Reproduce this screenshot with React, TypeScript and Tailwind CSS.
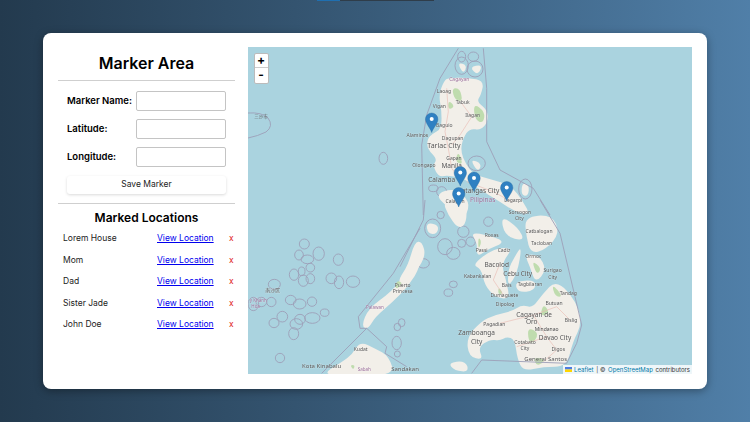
import React from "react";

type P = [number, number];
const O3: P = [380, 45];
const O4: P = [400, 200];
const O5: P = [250, 200];
const conv = (o: P, pts: number[]) => {
  const out: string[] = [];
  for (let i = 0; i < pts.length; i += 2) out.push(`${(o[0] + pts[i] / 3).toFixed(1)},${(o[1] + pts[i + 1] / 3).toFixed(1)}`);
  return out.join(" ");
};
const smooth = (o: P, pts: number[]) => {
  const p: P[] = [];
  for (let i = 0; i < pts.length; i += 2) p.push([o[0] + pts[i] / 3, o[1] + pts[i + 1] / 3]);
  const mid = (a: P, b: P): P => [(a[0] + b[0]) / 2, (a[1] + b[1]) / 2];
  const s = mid(p[p.length - 1], p[0]);
  let d = `M${s[0].toFixed(1)} ${s[1].toFixed(1)}`;
  p.forEach((c, i) => {
    const m = mid(c, p[(i + 1) % p.length]);
    d += ` Q${c[0].toFixed(1)} ${c[1].toFixed(1)} ${m[0].toFixed(1)} ${m[1].toFixed(1)}`;
  });
  return d + " Z";
};

const land: [P, number[]][] = [
  [O3, [205,98,265,98,312,108,303,150,290,170,322,195,324,230,302,256,270,250,248,280,242,320,257,356,280,388,330,402,394,422,430,470,450,510,405,500,360,470,300,434,262,408,240,398,200,391,176,396,158,362,172,342,142,312,142,282,158,266,184,252,185,200,176,150,192,108]],
  [O3, [165,448,225,428,270,470,258,514,235,514,202,486]],
  [O3, [270,342,306,356,294,382]],
  [O3, [426,414,448,420,444,454,424,450]],
  [O3, [232,52,262,60,250,88]],
  [O3, [268,66,308,58,294,92]],
  [O4, [128,2,196,-4,202,30,196,76,172,84,144,44]],
  [O4, [210,94,296,114,310,130,266,146,230,172,232,130]],
  [O4, [284,144,340,144,304,190,318,240,330,298,286,292,254,256,244,206,216,194]],
  [O4, [366,136,352,220,324,262,324,210,344,170]],
  [O4, [344,244,408,240,404,272,354,278]],
  [O4, [374,164,416,164,440,210,406,250,390,200]],
  [O4, [374,50,456,44,480,100,436,150,392,160,379,110]],
  [O4, [302,46,356,84,374,124,314,108]],
  [O4, [282,345,336,334,366,314,398,324,426,284,470,238,530,306,546,372,518,426,500,500,430,500,370,514,352,476,344,418,320,410,300,422,270,418,234,442,250,480,206,470,200,412,244,364]],
  [O4, [44,126,66,124,78,170,36,230,6,264,-6,240,24,196]],
  [O4, [78,68,116,74,112,102,84,102]],
  [O4, [144,488,196,482,208,516,164,512]],
  [O5, [334,378,356,324,426,274,464,224,512,128,512,198,476,258,426,308,376,350,354,388]],
  [O5, [205,530,276,486,306,464,330,424,376,446,416,468,436,530]],
];

const green: [P, number[]][] = [
  [O3, [215,130,240,130,248,170,225,165]],
  [O3, [280,175,315,200,310,235,285,225]],
  [O3, [235,318,250,360,225,350]],
  [O3, [205,165,225,185,205,195]],
  [O4, [235,110,245,125,235,150]],
  [O4, [430,310,450,340,420,350]],
  [O4, [380,380,420,400,390,440]],
  [O4, [400,470,440,480,410,500]],
  [O4, [455,250,490,290,465,290]],
  [O4, [395,180,425,205,410,225]],
  [O4, [295,260,310,280,295,285]],
  [O5, [440,240,460,250,435,270]],
  [O5, [300,495,315,495,310,510]],
];

const lines: [P, number[]][] = [
  [O3, [235,10,180,100,140,210,125,300,130,510]],
  [O3, [310,10,320,130,320,290,360,375,460,430,510,510]],
  [O4, [75,0,70,60,0,200]],
  [O4, [420,0,480,100,545,375,530,430,500,490,245,480,215,520]],
  [O5, [510,85,430,220,325,350,330,385,350,385,215,520]],
  [O5, [350,385,410,440,405,460,470,500]],
];

const roads: [P, number[]][] = [
  [O3, [200,130,205,200,195,260,205,310,215,370,245,410]],
  [O3, [245,175,275,215,240,270,215,300]],
  [O3, [260,410,340,440,395,470]],
  [O4, [300,190,280,240,310,285]],
  [O4, [300,370,400,345,470,320,510,360]],
  [O4, [400,345,440,410,470,450,430,485]],
  [O4, [350,440,440,410]],
];

const rings: [P, number, number, number, number][] = [
  [O5,163,132,15,15],[O5,147,165,13,15],[O5,206,161,17,20],[O5,172,178,19,13],[O5,265,179,15,17],
  [O5,132,224,14,17],[O5,155,214,10,13],[O5,181,203,13,13],[O5,181,236,13,15],[O5,160,242,15,17],
  [O5,244,235,16,16],[O5,267,247,14,19],[O5,309,245,20,17],[O5,73,253,18,15],[O5,64,306,14,14],
  [O5,10,312,16,20],[O5,34,306,16,14],[O5,122,300,16,14],[O5,149,312,19,15],[O5,186,305,14,14],
  [O5,97,350,16,16],[O5,72,369,15,14],[O5,224,338,13,11],[O5,187,354,23,16],[O5,150,358,16,15],
  [O5,139,372,19,16],[O5,131,401,15,18],[O5,90,474,14,14],[O5,455,368,10,12],[O5,442,381,10,11],
  [O5,440,429,14,20],[O5,442,462,9,9],
  [O3,10,340,13,18],[O3,245,62,20,26],[O3,285,72,24,24],[O3,280,35,16,14],[O3,245,35,12,16],
  [O3,160,430,14,10],[O3,185,440,15,15],[O3,290,355,26,22],[O3,436,432,20,30],
  [O4,122,45,11,11],[O4,98,85,24,28],[O4,135,140,22,24],[O4,160,160,20,18],[O4,70,190,18,14],[O4,145,278,13,11],
  [O4,160,253,12,10],[O4,265,65,14,14],[O4,190,95,17,17],[O4,212,125,14,14],[O4,185,130,12,12],
];

type L = [P, number, number, string, number?, string?];
const labels: L[] = [
  [O3,238,108,"Cagayan",5,"#9b6f9b"],[O3,192,145,"Laoag",5],[O3,248,176,"Tabuk",5],[O3,178,188,"Vigan",5],
  [O3,193,246,"Baguio",5],[O3,278,217,"Ilagan",5],[O3,112,275,"Alaminos",5],[O3,218,284,"Dagupan",5],
  [O3,192,309,"Tarlac City",7],[O3,222,345,"Gapan",5],[O3,132,367,"Olongapo",5],[O3,215,369,"Manila",6.5],
  [O3,185,412,"Calamba",6.5],[O3,295,443,"Batangas City",6.5],[O3,308,470,"Pilipinas",6.5,"#9b6f9b"],
  [O3,225,475,"Calapan",5],[O3,400,472,"Legazpi",5],[O3,420,506,"Sorsogon",5],
  [O4,358,60,"City",5],[O4,417,100,"Catbalogan",5],[O4,275,112,"Roxas",5],
  [O4,425,136,"Tacloban",5],[O4,245,156,"Passi",5],[O4,312,156,"Cadiz",5],[O4,400,175,"Ormoc",5],
  [O4,290,202,"Bacolod",6.5],[O4,458,217,"Surigao",5],[O4,458,236,"City",5],[O4,233,233,"Kabankalan",5],
  [O4,353,229,"Cebu City",6.5],[O4,390,257,"Tagbilaran",5],[O4,320,260,"Bais",5],[O4,505,284,"Tandag",5],
  [O4,313,292,"Dumaguete",5],[O4,462,315,"Butuan",5],[O4,315,317,"Dipolog",5],[O4,402,350,"Cagayan de",6.5],
  [O4,513,365,"Bislig",5],[O4,395,372,"Oro",6.5],[O4,283,379,"Pagadian",5],[O4,440,392,"Mindanao",5,"#444"],
  [O4,230,404,"Zamboanga",6.5],[O4,465,420,"Davao City",6.5],[O4,230,432,"City",6.5],[O4,375,431,"Cotabato",5],
  [O4,375,449,"City",5],[O4,475,454,"Digos",5],[O4,437,482,"General Santos",6],
  [O5,68,276,"南沙区",5],[O5,25,306,"y Khánh",4.5,"#9b6f9b"],[O5,17,324,"Hòa",4.5,"#9b6f9b"],
  [O5,375,326,"Palawan",4.5,"#9b6f9b"],[O5,458,261,"Puerto",5],[O5,458,278,"Princesa",5],
  [O5,332,454,"Kudat",5],[O5,215,504,"Kota Kinabalu",6],[O5,343,513,"Sabah",4.5,"#9b6f9b"],[O5,465,514,"Sandakan",6],
];

const pins: P[] = [[431.7,113],[460.3,166.5],[474,172],[458.7,187.5],[506.7,181.5]];

function MapArt() {
  return (
    <svg viewBox="248 47 444 327" className="w-full h-full block blur-[0.35px] font-['Noto_Sans','Noto_Sans_CJK_SC',sans-serif]">
      <rect x="248" y="47" width="444" height="327" fill="#aad3df" />
      {rings.map(([o, x, y, rx, ry], i) => (
        <ellipse key={i} cx={o[0] + x / 3} cy={o[1] + y / 3} rx={rx / 3} ry={ry / 3} fill="none" stroke="#9d9fb8" strokeWidth="0.9" />
      ))}
      <path d="M248 113 Q262 112 268 118 Q274 126 266 132 Q258 136 248 138" fill="none" stroke="#9d9fb8" strokeWidth="0.9" />
      {land.map(([o, p], i) => (
        <path key={i} d={smooth(o, p)} fill="#f2efe9" />
      ))}
      {green.map(([o, p], i) => (
        <path key={i} d={smooth(o, p)} fill="#bfdcae" />
      ))}
      {roads.map(([o, p], i) => (
        <polyline key={i} points={conv(o, p)} fill="none" stroke="#eab9b0" strokeWidth="0.6" />
      ))}
      {lines.map(([o, p], i) => (
        <polyline key={i} points={conv(o, p)} fill="none" stroke="#9d9fb8" strokeWidth="0.9" />
      ))}
      {labels.map(([o, x, y, t, s, c], i) => (
        <text key={i} x={o[0] + x / 3} y={o[1] + y / 3} fontSize={s ?? 5} fill={c ?? "#555"} textAnchor="middle" stroke="#ffffff" strokeOpacity="0.35" strokeWidth="0.6" paintOrder="stroke">
          {t}
        </text>
      ))}
      <text x="261" y="118" fontSize="4.5" fill="#666" textAnchor="middle">三沙市</text>
      {pins.map(([x, y], i) => (
        <g key={i} transform={`translate(${x} ${y})`}>
          <path d="M0 19.5 C-1 15.5 -6.2 10.5 -6.2 6.2 A6.2 6.2 0 0 1 6.2 6.2 C6.2 10.5 1 15.5 0 19.5 Z" fill="#2f80c2" stroke="#2a6c9e" strokeWidth="0.4" />
          <circle cx="0" cy="6" r="2" fill="#ffffff" />
        </g>
      ))}
    </svg>
  );
}

const label = "text-[9.5px] font-semibold text-black whitespace-nowrap";
const input = "w-[90px] h-[19.5px] border border-[#c4c4c4] rounded-[2px] bg-white shrink-0";

const rows = ["Lorem House", "Mom", "Dad", "Sister Jade", "John Doe"];

export default function App() {
  return (
    <div className="w-[750px] h-[422px] overflow-hidden flex flex-col bg-gradient-to-r from-[#233a4e] to-[#507fa8] font-['Inter','Noto_Sans',sans-serif]">
      <div className="h-px flex justify-center">
        <div className="w-[23px] bg-[#1f6fb0]" />
        <div className="w-[94px] bg-[#2f3d4a]" />
      </div>
      <div className="mt-[32px] mx-[43px] h-[356px] bg-white rounded-lg shadow-[0_2px_8px_rgba(0,0,0,0.35)] flex pl-[15px] pr-[15px] pt-[14px] gap-[13px]">
        <div className="w-[177px] shrink-0 flex flex-col">
          <h1 className="text-[16px] leading-[24px] font-semibold text-black text-center pt-[4px]">Marker Area</h1>
          <div className="h-px bg-[#cfcfcf] mt-[5px]" />
          <div className="flex flex-col gap-[8.5px] mt-[10px] px-[9px]">
            {["Marker Name:", "Latitude:", "Longitude:"].map((t) => (
              <div key={t} className="flex items-center justify-between">
                <span className={label}>{t}</span>
                <div className={input} />
              </div>
            ))}
          </div>
          <button className="mt-[9px] mx-[9px] h-[18px] rounded-[3px] bg-white shadow-[0_1px_3px_rgba(0,0,0,0.15)] text-[8.5px] text-[#222] text-center">Save Marker</button>
          <div className="h-px bg-[#cfcfcf] mt-[9.5px]" />
          <h2 className="text-[12px] leading-[18px] font-semibold text-black text-center mt-[5px]">Marked Locations</h2>
          <div className="flex flex-col mt-[1px] pl-[5px]">
            {rows.map((r) => (
              <div key={r} className="h-[21.5px] flex items-center text-[8.5px] text-[#222]">
                <span className="w-[94px]">{r}</span>
                <a href="#" className="w-[72px] text-[#0000ee] underline">View Location</a>
                <span className="text-[#e02020]">x</span>
              </div>
            ))}
          </div>
        </div>
        <div className="relative w-[444px] h-[327px] shrink-0 overflow-hidden">
          <MapArt />
          <div className="absolute left-[5.5px] top-[5.5px] w-[15px] h-[31px] bg-white border border-[#bbb] rounded-[2px] flex flex-col items-center text-black font-bold">
            <div className="h-[15px] w-full flex items-center justify-center text-[12px] leading-none border-b border-[#ccc]">+</div>
            <div className="h-[15px] w-full flex items-center justify-center text-[12px] leading-none">-</div>
          </div>
          <div className="absolute right-0 bottom-0 h-[9px] px-[2px] bg-white/80 flex items-center gap-[1px] text-[6px] leading-none text-[#333] whitespace-nowrap">
            <svg width="7" height="5" viewBox="0 0 7 5" className="mr-[1px]"><rect width="7" height="2.5" fill="#4C7BE1" /><rect y="2.5" width="7" height="2.5" fill="#FFD500" /></svg>
            <span className="text-[#0078a8]">Leaflet</span>
            <span>&nbsp;|&nbsp;©&nbsp;</span>
            <span className="text-[#0078a8]">OpenStreetMap</span>
            <span>&nbsp;contributors</span>
          </div>
        </div>
      </div>
    </div>
  );
}
